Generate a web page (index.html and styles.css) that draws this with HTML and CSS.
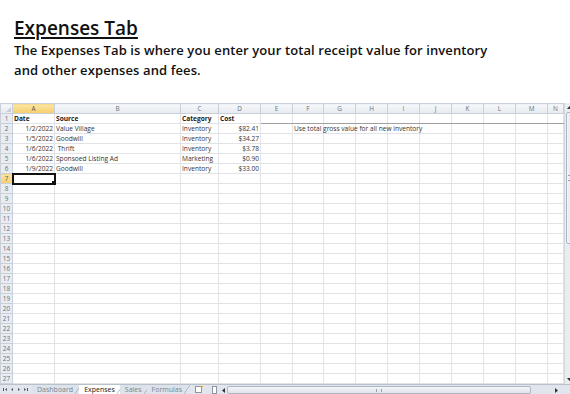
FILE: index.html
```html
<!DOCTYPE html>
<html lang="en">
<head>
    <meta charset="UTF-8">
    <title>Expenses Tab</title>
    <link rel="stylesheet" href="styles.css">
</head>
<body>
    <div class="intro">
        <h1>Expenses Tab</h1>
        <p>The Expenses Tab is where you enter your total receipt value for inventory and other expenses and fees.</p>
    </div>

    <div class="workbook">
        <div class="sheet-area">
            <table class="grid" id="grid">
                <colgroup>
                    <col style="width:12px"><col style="width:42px"><col style="width:126px">
                    <col style="width:38px"><col style="width:42px"><col style="width:32px">
                    <col style="width:31px"><col style="width:32px"><col style="width:32px">
                    <col style="width:32px"><col style="width:32px"><col style="width:32px">
                    <col style="width:32px"><col style="width:32px"><col style="width:16px">
                </colgroup>
                <tbody id="rows"></tbody>
            </table>
            <div class="vscroll">
                <div class="arrow">
                    <svg width="5" height="3" viewBox="0 0 5 3"><path d="M0 3 L2.5 0 L5 3 Z" fill="#333"/></svg>
                </div>
                <div class="thumb"><span class="grip"></span></div>
                <div class="track"></div>
                <div class="arrow">
                    <svg width="5" height="3" viewBox="0 0 5 3"><path d="M0 0 L2.5 3 L5 0 Z" fill="#333"/></svg>
                </div>
            </div>
        </div>

        <div class="tabbar">
            <div class="nav">
                <svg width="30" height="9" viewBox="0 0 30 9">
                    <rect x="3" y="3" width="1" height="3" fill="#4a5566"/>
                    <path d="M7 3 L5 4.5 L7 6 Z" fill="#4a5566"/>
                    <path d="M13 3 L11 4.5 L13 6 Z" fill="#4a5566"/>
                    <path d="M18 3 L20 4.5 L18 6 Z" fill="#4a5566"/>
                    <path d="M24 3 L26 4.5 L24 6 Z" fill="#4a5566"/>
                    <rect x="27" y="3" width="1" height="3" fill="#4a5566"/>
                </svg>
            </div>
            <div class="tabs">
                <span class="tab">Dashboard</span>
                <span class="tab active">Expenses</span>
                <span class="tab">Sales</span>
                <span class="tab">Formulas</span>
                <span class="newtab">
                    <svg width="10" height="8" viewBox="0 0 10 8"><rect x="1.5" y="1.5" width="6" height="6" fill="#fff" stroke="#8a97a8"/><path d="M6 1 l1.2 1.6 l1.8 -1.4" stroke="#e0a030" fill="none"/></svg>
                </span>
            </div>
            <div class="hscroll">
                <span class="split"></span>
                <span class="harrow">
                    <svg width="3" height="5" viewBox="0 0 3 5"><path d="M3 0 L0 2.5 L3 5 Z" fill="#333"/></svg>
                </span>
                <div class="hthumb"><span class="hgrip"></span></div>
                <div class="htrack"></div>
                <span class="harrow">
                    <svg width="3" height="5" viewBox="0 0 3 5"><path d="M0 0 L3 2.5 L0 5 Z" fill="#333"/></svg>
                </span>
            </div>
        </div>
    </div>

    <script>
        const cols = ['A', 'B', 'C', 'D', 'E', 'F', 'G', 'H', 'I', 'J', 'K', 'L', 'M', 'N'];
        const data = {
            1: ['Date', 'Source', 'Category', 'Cost'],
            2: ['1/2/2022', 'Value Village', 'Inventory', '$82.41', '', 'Use total gross value for all new inventory'],
            3: ['1/5/2022', 'Goodwill', 'Inventory', '$34.27'],
            4: ['1/6/2022', '\u00a0Thrift', 'Inventory', '$3.78'],
            5: ['1/6/2022', 'Sponsoed Listing Ad', 'Marketing', '$0.90'],
            6: ['1/9/2022', 'Goodwill', 'Inventory', '$33.00']
        };

        const body = document.getElementById('rows');

        let head = '<tr class="head"><th class="corner"><span></span></th>';
        cols.forEach(c => {
            head += '<th class="' + (c === 'A' ? 'sel' : '') + '">' + c + '</th>';
        });
        let html = head + '</tr>';

        for (let r = 1; r <= 28; r++) {
            const vals = data[r] || [];
            html += '<tr><th class="rh' + (r === 7 ? ' sel' : '') + '">' + r + '</th>';
            cols.forEach((c, i) => {
                const v = vals[i] || '';
                let cls = [];
                if (r === 1) cls.push('bold');
                if (r > 1 && (i === 0 || i === 3)) cls.push('num');
                if (i === 5 && v) cls.push('over');
                if (r === 1 && i >= 4) cls.push('under');
                if (r === 7 && i === 0) cls.push('active');
                html += '<td class="' + cls.join(' ') + '">' + v + '</td>';
            });
            html += '</tr>';
        }
        body.innerHTML = html;
    </script>
</body>
</html>
```

FILE: styles.css
```css
body {
    margin: 0;
    background: #fff;
    width: 570px;
    height: 394px;
    overflow: hidden;
}

.intro {
    padding: 16px 0 0 14px;
    height: 90px;
    box-sizing: border-box;
    font-family: "Open Sans", sans-serif;
    color: #111;
}

.intro h1 {
    margin: 0;
    font-size: 19px;
    font-weight: 600;
    line-height: 24px;
    text-decoration: underline;
    text-decoration-thickness: 1.5px;
    text-underline-offset: 2px;
    display: inline-block;
}

.intro p {
    margin: 0;
    width: 490px;
    font-size: 13px;
    font-weight: 600;
    line-height: 20px;
    letter-spacing: 0.1px;
}

.workbook {
    margin-top: 13px;
    font-family: "Open Sans", "Liberation Sans", sans-serif;
}

.sheet-area {
    display: flex;
    height: 281px;
    overflow: hidden;
}

.grid {
    table-layout: fixed;
    border-collapse: collapse;
    width: 561px;
    font-size: 6.6px;
    color: #333;
}

.grid tr {
    height: 10px;
}

.grid td {
    border: 1px solid #e1e3e6;
    padding: 0 1px;
    height: 9px;
    line-height: 9px;
    white-space: nowrap;
    overflow: hidden;
}

.grid td.num {
    text-align: right;
}

.grid td.bold {
    font-weight: 700;
    color: #222;
}

.grid td.over {
    overflow: visible;
    position: relative;
    z-index: 1;
}

.grid td.under {
    border-bottom: 1px solid #a0a0a0;
}

.grid td.active {
    outline: 2px solid #111;
    outline-offset: -1px;
    position: relative;
}

.grid td.active::after {
    content: "";
    position: absolute;
    right: -3px;
    bottom: -3px;
    width: 4px;
    height: 4px;
    background: #111;
    border: 1px solid #fff;
}

.grid th {
    font-weight: 400;
    font-size: 6.4px;
    color: #66707e;
    background: linear-gradient(#f6f8fa, #e6eaef);
    border: 1px solid #c9d0d9;
    padding: 0;
    line-height: 9px;
}

.grid th.rh {
    background: #e9edf2;
    text-align: center;
}

.grid th.sel {
    background: linear-gradient(#fbe6a6, #f6cd6a);
    color: #555;
}

.grid th.corner span {
    display: block;
    width: 0;
    height: 0;
    margin: 2px 1px 0 auto;
    border-left: 5px solid transparent;
    border-bottom: 5px solid #c8ced6;
}

.vscroll {
    width: 9px;
    flex: none;
    display: flex;
    flex-direction: column;
    background: #e9edf2;
    border-left: 1px solid #d4d9e0;
}

.vscroll .arrow {
    height: 9px;
    display: flex;
    align-items: center;
    justify-content: center;
}

.vscroll .thumb {
    height: 130px;
    margin: 0 1px;
    background: linear-gradient(90deg, #f3f5f8, #dfe4ea);
    border: 1px solid #aeb7c3;
    border-radius: 2px;
    display: flex;
    align-items: center;
    justify-content: center;
}

.grip {
    width: 4px;
    height: 4px;
    border-top: 1px solid #9aa4b1;
    border-bottom: 1px solid #9aa4b1;
}

.vscroll .track {
    flex: 1;
}

.tabbar {
    display: flex;
    height: 10px;
    background: #e1e6ec;
    border-top: 1px solid #b9c2cc;
    font-size: 7px;
    line-height: 9px;
    color: #7a8390;
}

.nav {
    width: 32px;
    flex: none;
}

.nav svg {
    display: block;
}

.tabs {
    display: flex;
    width: 180px;
    flex: none;
}

.tab {
    position: relative;
    padding: 0 5px 0 5px;
    background: #dde3ea;
}

.tab::after {
    content: "";
    position: absolute;
    top: 0;
    right: -3px;
    width: 6px;
    height: 9px;
    background: linear-gradient(to bottom right, transparent 44%, #9ea9b6 50%, transparent 56%);
}

.tab.active {
    background: #fff;
    color: #222;
    margin-left: 1px;
}

.newtab {
    padding: 0 6px 0 7px;
}

.newtab svg {
    vertical-align: -1px;
}

.hscroll {
    flex: 1;
    display: flex;
    align-items: stretch;
    padding-right: 10px;
}

.split {
    width: 3px;
    margin: 1px 2px 1px 0;
    border: 1px solid #8d97a4;
    background: #fff;
}

.harrow {
    width: 8px;
    display: flex;
    align-items: center;
    justify-content: center;
}

.hthumb {
    width: 302px;
    margin: 1px 0;
    background: linear-gradient(#f3f5f8, #dfe4ea);
    border: 1px solid #aeb7c3;
    border-radius: 2px;
    display: flex;
    align-items: center;
    justify-content: center;
}

.hgrip {
    width: 4px;
    height: 3px;
    border-left: 1px solid #9aa4b1;
    border-right: 1px solid #9aa4b1;
}

.htrack {
    flex: 1;
}
```
